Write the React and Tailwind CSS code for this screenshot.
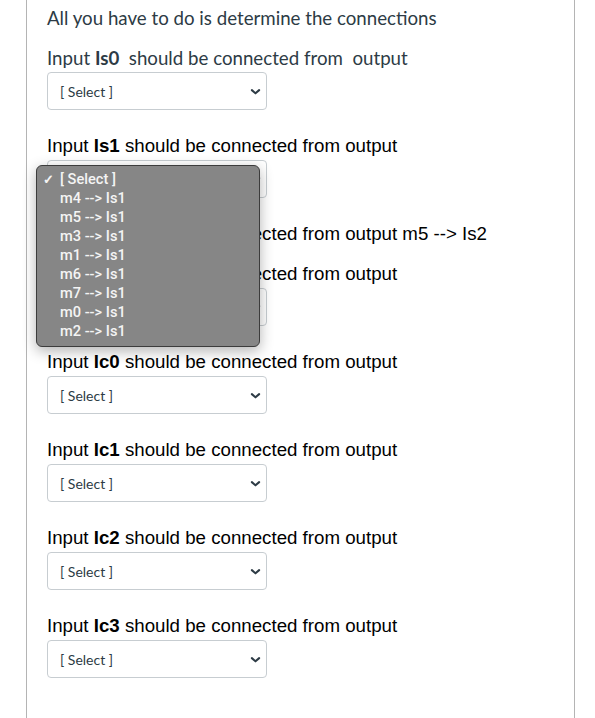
import React from 'react';

const QUESTIONS = [
  { id: 'Is0', lato: true },
  { id: 'Is1' },
  { id: 'Is2', answer: 'm5 --> Is2' },
  { id: 'Is3' },
  { id: 'Ic0' },
  { id: 'Ic1' },
  { id: 'Ic2' },
  { id: 'Ic3' },
];

const OPTIONS = ['m4', 'm5', 'm3', 'm1', 'm6', 'm7', 'm0', 'm2'];

const FakeSelect = () => (
  <div className="mb-2 flex h-[38px] w-[220px] items-center justify-between rounded border border-[#c7cdd1] bg-white pl-3 pr-[5px] font-['Lato',sans-serif] text-[14px] text-[#2d3b45]">
    <span>[ Select ]</span>
    <svg width="11" height="11" viewBox="0 0 12 12" fill="none">
      <path d="M2 4.5 L6 8 L10 4.5" stroke="#2d3b45" strokeWidth="2.2" strokeLinecap="round" strokeLinejoin="round" />
    </svg>
  </div>
);

const Question = ({ q }) => (
  <div className="pb-4">
    {q.lato ? (
      <p className="h-6 font-['Lato',sans-serif] text-[18.7px] leading-6 text-[#2d3b45]">
        Input <b>{q.id}</b>&nbsp; should be connected from &nbsp;output
      </p>
    ) : (
      <p className="h-6 font-['Liberation_Sans',Arial,sans-serif] text-[18.7px] leading-6 text-black">
        Input <b>{q.id}</b> should be connected from output{q.answer ? ` ${q.answer}` : ''}
      </p>
    )}
    {!q.answer && (
      <div className="mt-0.5">
        <FakeSelect />
      </div>
    )}
  </div>
);

const App = () => {
  return (
    <div className="relative h-[718px] w-[595px] overflow-hidden bg-white">
      <div className="ml-[26px] h-full w-[549px] border-x border-[#b4b4b4] pl-5 pt-1.5">
        <p className="mb-4 h-6 font-['Lato',sans-serif] text-[18.7px] leading-6 text-[#2d3b45]">
          All you have to do is determine the connections
        </p>
        {QUESTIONS.map(q => (
          <Question key={q.id} q={q} />
        ))}
      </div>

      {/* open native dropdown for Is1 */}
      <div className="absolute left-[36px] top-[165px] h-[182px] w-[224px] rounded-md border border-[#3c3c3c] bg-[#868686] pt-[4px] font-['Roboto',sans-serif] text-[14.6px] font-medium text-[#f4f4f4] shadow-[0_4px_14px_rgba(0,0,0,0.3)]">
        <div className="flex h-[19px] items-center">
          <span className="w-[23px] pl-[6px] text-[13px] font-bold">✓</span>
          <span>[ Select ]</span>
        </div>
        {OPTIONS.map(o => (
          <div key={o} className="flex h-[19px] items-center pl-[23px]">
            {o} --&gt; Is1
          </div>
        ))}
      </div>
    </div>
  );
};

export default App;
